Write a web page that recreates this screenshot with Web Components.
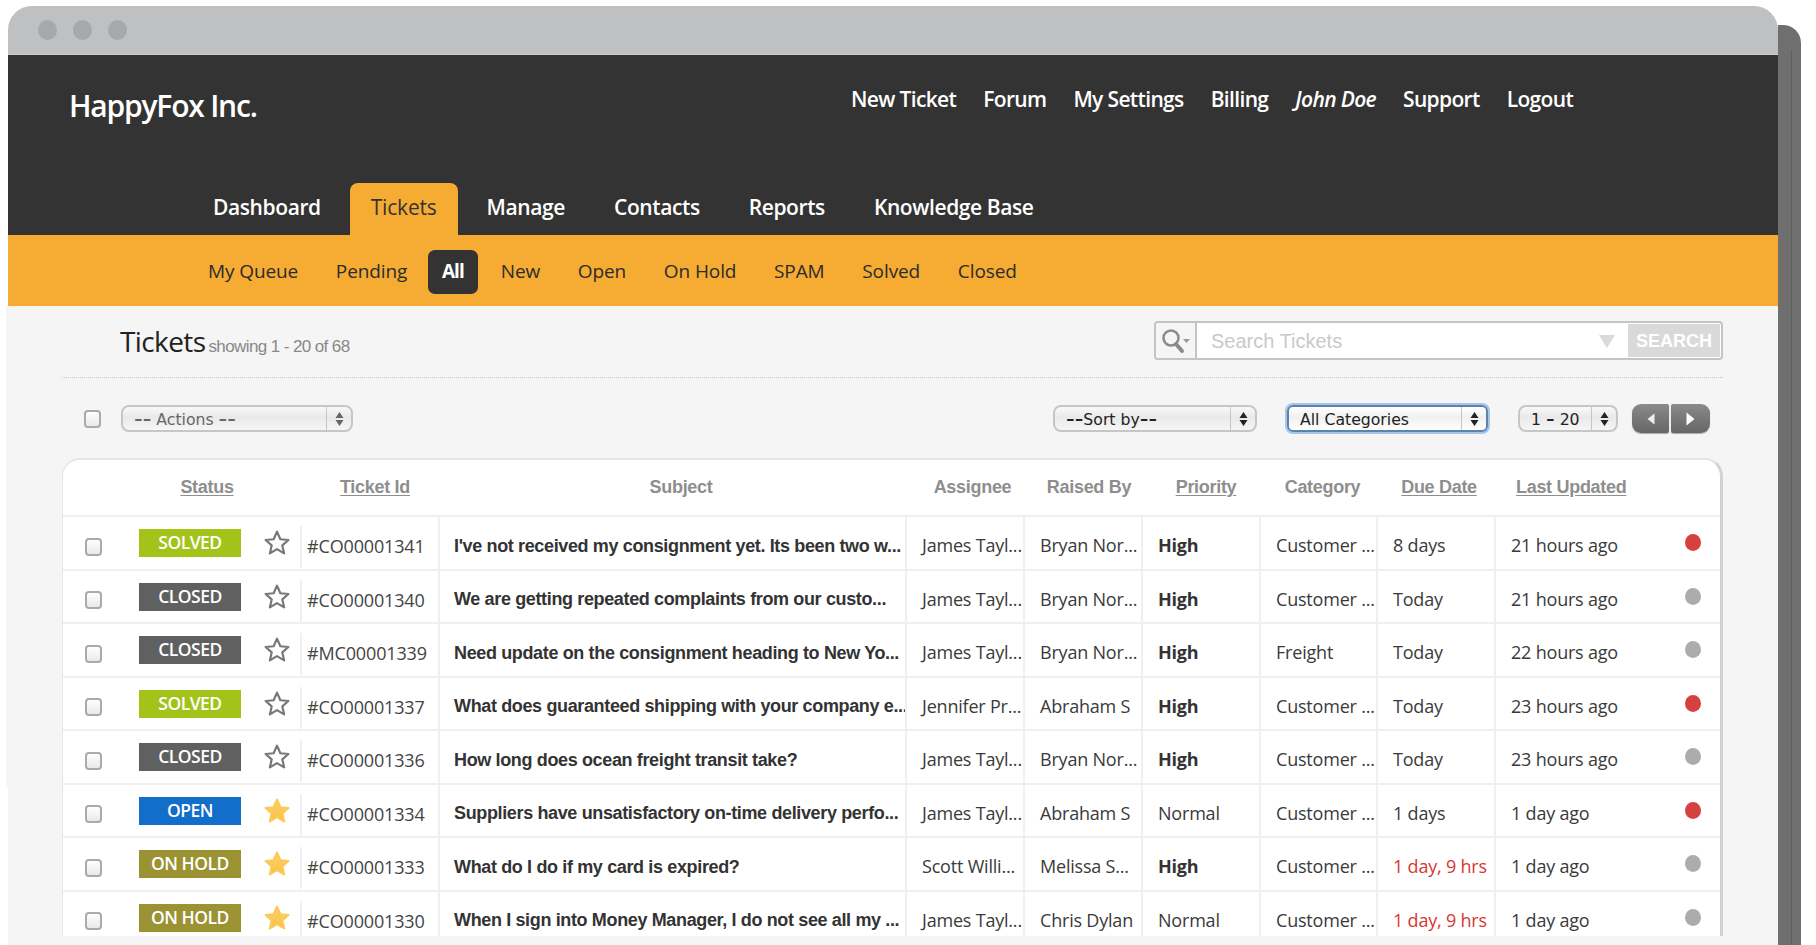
<!DOCTYPE html>
<html lang="en">
<head>
<meta charset="utf-8">
<title>HappyFox Inc.</title>
<style>
  html, body { margin: 0; height: 945px; overflow: hidden; background: #fff; }
  body { font-family: "Open Sans", "Liberation Sans", sans-serif; }
</style>
</head>
<body>
<hf-page>
  <hf-topbar brand="HappyFox Inc."></hf-topbar>
  <hf-tabs active="Tickets"></hf-tabs>
  <hf-subnav active="All"></hf-subnav>
  <hf-content>
    <hf-heading title="Tickets" note="showing 1 - 20 of 68"></hf-heading>
    <hf-toolbar></hf-toolbar>
    <hf-table>
      <hf-row status="SOLVED" ticket="#CO00001341" subject="I've not received my consignment yet. Its been two w..." assignee="James Tayl..." raised="Bryan Nor..." priority="High" category="Customer ..." due="8 days" updated="21 hours ago" dot="red"></hf-row>
      <hf-row status="CLOSED" ticket="#CO00001340" subject="We are getting repeated complaints from our custo..." assignee="James Tayl..." raised="Bryan Nor..." priority="High" category="Customer ..." due="Today" updated="21 hours ago" dot="gray"></hf-row>
      <hf-row status="CLOSED" ticket="#MC00001339" subject="Need update on the consignment heading to New Yo..." assignee="James Tayl..." raised="Bryan Nor..." priority="High" category="Freight" due="Today" updated="22 hours ago" dot="gray"></hf-row>
      <hf-row status="SOLVED" ticket="#CO00001337" subject="What does guaranteed shipping with your company e..." assignee="Jennifer Pr..." raised="Abraham S" priority="High" category="Customer ..." due="Today" updated="23 hours ago" dot="red"></hf-row>
      <hf-row status="CLOSED" ticket="#CO00001336" subject="How long does ocean freight transit take?" assignee="James Tayl..." raised="Bryan Nor..." priority="High" category="Customer ..." due="Today" updated="23 hours ago" dot="gray"></hf-row>
      <hf-row status="OPEN" starred ticket="#CO00001334" subject="Suppliers have unsatisfactory on-time delivery perfo..." assignee="James Tayl..." raised="Abraham S" priority="Normal" category="Customer ..." due="1 days" updated="1 day ago" dot="red"></hf-row>
      <hf-row status="ON HOLD" starred ticket="#CO00001333" subject="What do I do if my card is expired?" assignee="Scott Willi..." raised="Melissa S..." priority="High" category="Customer ..." due="1 day, 9 hrs" overdue updated="1 day ago" dot="gray"></hf-row>
      <hf-row status="ON HOLD" starred ticket="#CO00001330" subject="When I sign into Money Manager, I do not see all my ..." assignee="James Tayl..." raised="Chris Dylan" priority="Normal" category="Customer ..." due="1 day, 9 hrs" overdue updated="1 day ago" dot="gray"></hf-row>
    </hf-table>
  </hf-content>
</hf-page>

<script>
(function(){
    const COLUMNS = '76px 102px 59px 138px 467px 118px 118px 118px 117px 118px 1fr'

    function define(name, css, html) {
        customElements.define(name, class extends HTMLElement {
            connectedCallback() {
                this.attachShadow({mode: "open"})
                const get = (k, d = '') => this.getAttribute(k) ?? d
                this.shadowRoot.innerHTML = `<style>${css}</style>${html(get, this)}`
            }
        })
    }

    define('hf-page', `
        :host { display: flex; width: 1816px; height: 945px; padding: 6px 0 0 8px; box-sizing: border-box; position: relative; }
        .window { width: 1770px; display: flex; flex-direction: column; border-radius: 24px 24px 0 0; overflow: hidden; background: #f5f5f5; }
        .chrome { flex: none; height: 49px; background: #bfc0c2; display: flex; align-items: center; gap: 16px; padding: 0 0 0 30px; box-sizing: border-box; border-bottom: 1px solid #cfd0d1; }
        .chrome i { width: 19px; height: 20px; border-radius: 50%; background: #a6a8aa; }
        .behind { flex: none; width: 23px; margin-top: 19px; background: #6f6f6f; border-radius: 0 18px 0 0; position: relative; }
        .behind::after { content: ""; position: absolute; left: 13px; top: 25px; bottom: 0; width: 1px; background: #5f5f5f; }
        .edge { position: absolute; left: 6px; top: 306px; width: 2px; height: 481px; background: #f5f5f5; }
    `, () => `
        <div class="edge"></div>
        <div class="window">
            <div class="chrome"><i></i><i></i><i></i></div>
            <slot></slot>
        </div>
        <div class="behind"></div>
    `)

    define('hf-topbar', `
        :host { display: flex; flex: none; height: 114px; background: #333; color: #fff; align-items: flex-start; box-sizing: border-box; }
        .brand { margin: 31px 0 0 61px; width: 782px; font-size: 30px; line-height: 40px; font-weight: 600; letter-spacing: -1.200px; }
        nav { display: flex; gap: 27px; margin-top: 29px; font-size: 21px; line-height: 30px; font-weight: 600; letter-spacing: -.65px; }
        em { font-style: italic; }
    `, get => `
        <div class="brand">${get('brand')}</div>
        <nav>
            <span>New Ticket</span><span>Forum</span><span>My Settings</span><span>Billing</span><em>John Doe</em><span>Support</span><span>Logout</span>
        </nav>
    `)

    define('hf-tabs', `
        :host { display: flex; flex: none; height: 66px; background: #333; align-items: flex-end; padding-left: 185px; box-sizing: border-box; color: #fff; font-size: 21px; letter-spacing: -.4px; }
        span { height: 52px; line-height: 48px; padding: 0 20px; margin-right: 9px; box-sizing: border-box; border-radius: 8px 8px 0 0; font-weight: 600; }
        span.on { background: #f6ac33; color: #333; font-weight: 400; padding: 0 21px; letter-spacing: -.2px; }
    `, get => ['Dashboard', 'Tickets', 'Manage', 'Contacts', 'Reports', 'Knowledge Base']
        .map(t => `<span class="${t == get('active') ? 'on' : ''}">${t}</span>`).join(''))

    define('hf-subnav', `
        :host { display: flex; flex: none; height: 71px; background: #f6ac33; align-items: center; padding: 2px 0 0 184px; box-sizing: border-box; color: #2b2b2b; font-size: 19px; letter-spacing: -.1px; }
        span { height: 44px; line-height: 42px; padding: 0 16px; margin-right: 5.700px; box-sizing: border-box; }
        span.on { background: #333; color: #fff; border-radius: 7px; font-weight: 700; letter-spacing: -1px; padding: 0 14px; margin-left: -1px; margin-right: 7px; }
    `, get => ['My Queue', 'Pending', 'All', 'New', 'Open', 'On Hold', 'SPAM', 'Solved', 'Closed']
        .map(t => `<span class="${t == get('active') ? 'on' : ''}">${t}</span>`).join(''))

    define('hf-content', `
        :host { display: flex; flex-direction: column; flex: 1; min-height: 0; padding: 0 55px 9px 54px; box-sizing: border-box; background: #f5f5f5; }
    `, () => `<slot></slot>`)

    define('hf-heading', `
        :host { display: flex; flex: none; height: 72px; align-items: flex-start; justify-content: space-between; border-bottom: 1px dotted #c4c4c4; box-sizing: border-box; }
        .title { margin: 15px 0 0 58px; display: flex; align-items: baseline; gap: 3px; color: #222; font-size: 28px; line-height: 40px; letter-spacing: -.6px; }
        small { font-family: "Liberation Sans", sans-serif; font-size: 17px; color: #888; letter-spacing: -.6px; }
    `, get => `
        <div class="title">${get('title')}<small>${get('note')}</small></div>
        <hf-search placeholder="Search Tickets"></hf-search>
    `)

    define('hf-search', `
        :host { display: flex; width: 569px; height: 39px; margin-top: 15px; border: 2px solid #c4c4c4; border-radius: 4px; box-sizing: border-box; background: #fff; align-items: stretch; font-family: "Liberation Sans", sans-serif; }
        .icon { width: 39px; background: #f5f5f5; border-right: 2px solid #c4c4c4; display: flex; align-items: center; justify-content: center; border-radius: 3px 0 0 3px; }
        .field { flex: 1; padding: 2px 0 0 14px; color: #c9c9c9; font-size: 20px; line-height: 33px; display: flex; align-items: center; justify-content: space-between; }
        .field svg { margin-right: 12px; }
        button { width: 92px; margin: 1px; border: 0; background: #d9d9d9; color: #fff; font: bold 18px "Liberation Sans", sans-serif; padding: 1px 0 0; }
    `, get => `
        <div class="icon">
            <svg width="32" height="28" viewBox="0 0 32 28"><circle cx="11" cy="11" r="7.500" fill="none" stroke="#8a8a8a" stroke-width="2.500"/><path d="M16 17l6 7" stroke="#8a8a8a" stroke-width="4" stroke-linecap="round"/><path d="M23 12h7l-3.500 4z" fill="#999"/></svg>
        </div>
        <div class="field">${get('placeholder')}<svg width="16" height="13" viewBox="0 0 16 13"><path d="M0 0h16l-8 13z" fill="#dadada"/></svg></div>
        <button>SEARCH</button>
    `)

    define('hf-select', `
        :host { display: flex; flex: none; height: 27px; border: 2px solid #c6c6c6; border-radius: 8px; box-sizing: border-box; font: 15.700px "DejaVu Sans", sans-serif; color: #222; background: linear-gradient(#f9f9f9, #e9e9e9 45%, #f6f6f6); align-items: center; }
        :host([muted]) { color: #666; }
        :host([focused]) { border-color: #5a83ad; border-radius: 6px; box-shadow: 0 0 0 2px #a5c6e8; background: linear-gradient(#fff, #f0f0f0 45%, #fff); }
        .label { flex: 1; padding: 1px 0 0 11px; white-space: nowrap; }
        .dash { font-size: 24px; line-height: 1px; vertical-align: -2px; }
        .arrows { width: 24px; height: 100%; border-left: 1px solid #c6c6c6; display: flex; align-items: center; justify-content: center; }
    `, get => `
        <div class="label">${get('label').replace(/-+/g, m => `<span class="dash">${m}</span>`)}</div>
        <div class="arrows"><svg width="9" height="16" viewBox="0 0 9 16"><path d="M4.500 1L8.500 7h-8zM4.500 15L.5 9h8z" fill="${get('arrow', '#222')}"/></svg></div>
    `)

    define('hf-toolbar', `
        :host { display: flex; flex: none; height: 80px; align-items: center; box-sizing: border-box; padding: 1px 13px 0 22px; }
        .check { width: 17px; height: 18px; border: 2px solid #aaa; border-radius: 4px; box-sizing: border-box; background: linear-gradient(#fff, #e9e9e9); margin-right: 20px; }
        hf-select { margin-right: 30px; }
        .spacer { flex: 1; }
        .pager { display: flex; gap: 2px; margin-left: -16px; }
        .pager i { display: flex; align-items: center; justify-content: center; width: 37px; height: 29px; background: linear-gradient(#8a8a8a, #666); border-radius: 9px 2px 2px 9px; box-shadow: 0 1px 1px #aaa; }
        .pager i + i { width: 39px; border-radius: 2px 9px 9px 2px; }
    `, () => `
        <div class="check"></div>
        <hf-select label="-- Actions --" muted arrow="#666" style="width:232px"></hf-select>
        <div class="spacer"></div>
        <hf-select label="--Sort by--" style="width:204px"></hf-select>
        <hf-select label="All Categories" focused style="width:201px"></hf-select>
        <hf-select label="1 - 20" style="width:100px"></hf-select>
        <div class="pager">
            <i><svg width="8" height="12"><path d="M7.500 .5v11L.5 6z" fill="#eee"/></svg></i>
            <i><svg width="9" height="14"><path d="M.5 .5v13L8.500 7z" fill="#fff"/></svg></i>
        </div>
    `)

    define('hf-table', `
        :host { display: block; flex: 1; min-height: 0; overflow: hidden; background: #fff; border-radius: 18px 18px 0 0; border: solid #e6e6e6; border-width: 2px 3px 0 1px; border-right-color: #d2d2d2; box-sizing: border-box; }
        .head { display: grid; grid-template-columns: ${COLUMNS}; height: 57px; border-bottom: 2px solid #efefef; box-sizing: border-box; align-items: center; font: bold 18px "Liberation Sans", sans-serif; color: #8e8e8e; letter-spacing: -.3px; }
        .head span { text-align: center; }
        .head u { text-underline-offset: 2px; }
    `, () => `
        <div class="head">
            <span></span>
            <span style="padding-left:34px"><u>Status</u></span>
            <span></span>
            <span style="padding-left:12px"><u>Ticket Id</u></span>
            <span style="padding-left:19px">Subject</span>
            <span style="padding-left:17px">Assignee</span>
            <span style="padding-left:14px">Raised By</span>
            <span style="padding-left:12px"><u>Priority</u></span>
            <span style="padding-left:10px">Category</span>
            <span style="padding-left:8px"><u>Due Date</u></span>
            <span style="text-align:left;padding-left:22px"><u>Last Updated</u></span>
        </div>
        <slot></slot>
    `)

    const STATUS = { 'SOLVED': '#a4c31a', 'CLOSED': '#606060', 'OPEN': '#126dcb', 'ON HOLD': '#9a9233' }
    const STAR = 'M12 1.500l3.100 7 7.400.7-5.600 5 1.700 7.400L12 17.700l-6.600 3.900 1.700-7.400-5.600-5 7.400-.7z'

    define('hf-row', `
        :host { display: grid; grid-template-columns: ${COLUMNS}; height: 53.500px; border-bottom: 2px solid #efefef; box-sizing: border-box; font-size: 18px; color: #3a3a3a; letter-spacing: -.2px; }
        div { display: flex; align-items: center; padding: 5px 0 0 15px; white-space: nowrap; overflow: hidden; box-sizing: border-box; }
        .sep { border-left: 2px solid #f0f0f0; }
        .check { padding: 8px 0 0 22px; }
        .check i { width: 17px; height: 18px; border: 2px solid #aaa; border-radius: 4px; box-sizing: border-box; background: linear-gradient(#fff, #e9e9e9); }
        .status { padding: 0; align-items: flex-start; }
        .status b { display: block; width: 102px; height: 28px; margin-top: 12px; text-align: center; color: #fff; font: 600 17.500px/27px "Open Sans", sans-serif; letter-spacing: -.5px; }
        .star { padding: 0 0 0 23px; align-items: flex-start; }
        .star svg { margin-top: 13px; }
        .ticket { padding: 0 0 2px 5px; margin-top: 9px; height: 42px; color: #444; letter-spacing: -.15px; }
        .subject { padding: 7px 0 0 14px; font: bold 18px "Liberation Sans", sans-serif; color: #333; letter-spacing: -.36px; }
        .prio { font-weight: 700; color: #333; }
        .overdue { color: #d8372f; }
        .updated { position: relative; }
        .updated i { position: absolute; left: 189px; top: 17px; width: 16px; height: 17px; border-radius: 50%; }
    `, (get, el) => {
        const starred = el.hasAttribute('starred')
        const high = get('priority') == 'High'
        const dot = get('dot') == 'red' ? '#d5413f' : '#acacac'
        return `
            <div class="check"><i></i></div>
            <div class="status"><b style="background:${STATUS[get('status')]}">${get('status')}</b></div>
            <div class="star"><svg width="26" height="26" viewBox="0 0 24 24"><defs><linearGradient id="g" x1="0" y1="0" x2="0" y2="1"><stop offset="0" stop-color="#fdd36f"/><stop offset="1" stop-color="#fbbf42"/></linearGradient></defs><path d="${STAR}" fill="${starred ? 'url(#g)' : '#fff'}" stroke="${starred ? '#fcc956' : '#777'}" stroke-width="2" stroke-linejoin="round"/></svg></div>
            <div class="sep ticket">${get('ticket')}</div>
            <div class="sep subject">${get('subject')}</div>
            <div class="sep">${get('assignee')}</div>
            <div class="sep">${get('raised')}</div>
            <div class="sep ${high ? 'prio' : ''}">${get('priority')}</div>
            <div class="sep">${get('category')}</div>
            <div class="sep ${el.hasAttribute('overdue') ? 'overdue' : ''}">${get('due')}</div>
            <div class="sep updated">${get('updated')}<i style="background:${dot}"></i></div>
        `
    })
})()
</script>
</body>
</html>
